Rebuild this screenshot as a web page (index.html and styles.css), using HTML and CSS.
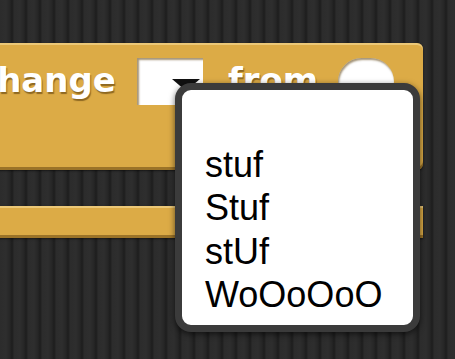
FILE: index.html
```html
<!DOCTYPE html>
<html lang="en">
<head>
    <meta charset="UTF-8">
    <title>Block dropdown</title>
    <link rel="stylesheet" href="styles.css">
</head>
<body>
    <div class="script-area">
        <!-- change [ v] from ( ) block -->
        <div class="block block-tall">
            <div class="block-row">
                <span class="block-label">change</span>
                <div class="dropdown">
                    <span class="arrow"></span>
                </div>
                <span class="block-label label-from">from</span>
                <div class="oval"></div>
            </div>
        </div>

        <div class="block block-thin"></div>
    </div>

    <!-- Dropdown menu -->
    <div class="menu">
        <ul class="menu-list">
            <li class="menu-item">&nbsp;</li>
            <li class="menu-item">stuf</li>
            <li class="menu-item">Stuf</li>
            <li class="menu-item">stUf</li>
            <li class="menu-item">WoOoOoO</li>
        </ul>
    </div>
</body>
</html>
```

FILE: styles.css
```css
* {
    margin: 0;
    padding: 0;
    box-sizing: border-box;
}

body {
    width: 455px;
    height: 359px;
    overflow: hidden;
    position: relative;
    background-color: #282828;
    background-image: repeating-linear-gradient(90deg,
        #2c2c2c 0px, #2e2e2e 6px, #262626 10px, #1d1d1d 12px, #2a2a2a 14px);
}

.script-area {
    padding-top: 43px;
}

.block {
    margin-left: -23px;
    width: 446px;
    background: #dcab46;
    border-radius: 0 6px 6px 0;
    box-shadow: inset 0 2px 0 rgba(255, 235, 180, 0.45),
                inset 0 -3px 0 rgba(90, 60, 10, 0.5),
                0 1px 2px rgba(0, 0, 0, 0.5);
}

.block-tall {
    height: 127px;
    padding-top: 15px;
}

.block-thin {
    margin-top: 36px;
    height: 32px;
    border-radius: 0;
}

.block-row {
    display: flex;
    align-items: flex-start;
    height: 47px;
}

.block-label {
    font-family: "DejaVu Sans", sans-serif;
    font-weight: bold;
    font-size: 34px;
    line-height: 45px;
    color: #fff;
    text-shadow: 1px 2px 1px rgba(90, 60, 10, 0.6);
}

.dropdown {
    margin-left: 21px;
    width: 66px;
    height: 47px;
    background: #fff;
    box-shadow: inset 2px 2px 2px rgba(90, 60, 10, 0.55);
    display: flex;
    justify-content: flex-end;
    padding: 21px 3px 0 0;
}

.arrow {
    width: 0;
    height: 0;
    border-left: 14px solid transparent;
    border-right: 14px solid transparent;
    border-top: 12px solid #111;
}

.label-from {
    margin-left: 25px;
}

.oval {
    margin-left: 20px;
    width: 56px;
    height: 47px;
    border-radius: 24px;
    background: #fff;
    box-shadow: inset 1px 2px 2px rgba(90, 60, 10, 0.55);
}

.menu {
    position: absolute;
    left: 175px;
    top: 83px;
    width: 245px;
    height: 249px;
    background: #fff;
    border: 7px solid #3b3b3b;
    border-radius: 16px;
    box-shadow: 0 2px 6px rgba(0, 0, 0, 0.6);
}

.menu-list {
    list-style: none;
    padding: 9px 0 0 23px;
}

.menu-item {
    font-family: "Liberation Sans", Arial, sans-serif;
    font-size: 36px;
    line-height: 43.5px;
    color: #000;
}
```
